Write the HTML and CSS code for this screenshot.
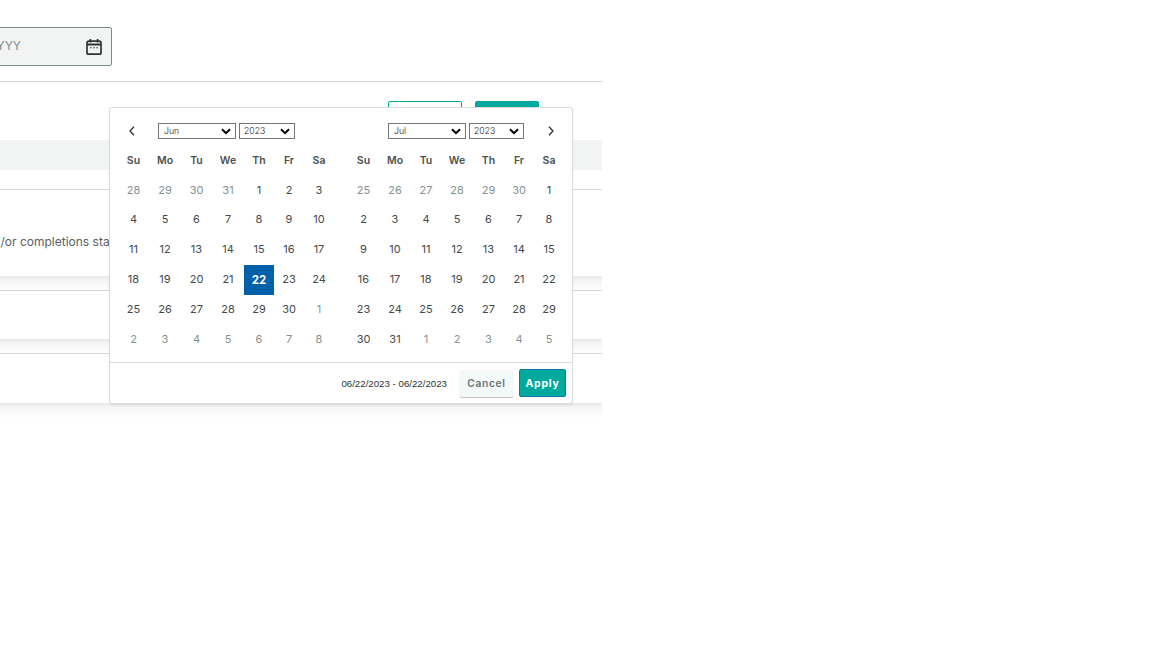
FILE: index.html
```html
<!DOCTYPE html>
<html lang="en">
<head>
<meta charset="utf-8">
<title>Date range</title>
<link rel="stylesheet" href="styles.css">
</head>
<body>
<div class="page">
  <div class="filter-row">
    <div class="date-field">
      <span class="placeholder">MM/DD/YYYY</span>
      <svg class="cal-icon" width="18" height="18" viewBox="0 0 18 18" fill="none" stroke="#2e3333" stroke-width="1.7">
        <rect x="2" y="3.2" width="14" height="13" rx="1.8"/>
        <path d="M5.4 1v3.4M12.6 1v3.4"/>
        <path d="M2 6.6h14" stroke-width="2"/>
        <path d="M5 9.8h1.6M8.2 9.8h1.6M11.4 9.8h1.6" stroke-width="1.1"/>
      </svg>
    </div>
  </div>
  <div class="actions">
    <span class="btn-outline"></span>
    <span class="btn-solid"></span>
  </div>
  <div class="band"></div>
  <div class="card first">
    <p class="card-text">Enrollments and/or completions status</p>
  </div>
  <div class="gap"></div>
  <div class="card second"></div>
  <div class="gap"></div>
  <div class="card third"></div>
  <div class="gap"></div>

  <div class="picker">
    <div class="calendars">
      <div class="calendar left">
        <div class="cal-head">
          <svg class="nav prev" width="10" height="12" viewBox="0 0 10 12" fill="none" stroke="#2e3333" stroke-width="1.3"><path d="M7 1.8 3 6l4 4.2"/></svg>
          <select class="month"><option>Jun</option></select>
          <select class="year"><option>2023</option></select>
        </div>
        <div class="grid">
          <b>Su</b><b>Mo</b><b>Tu</b><b>We</b><b>Th</b><b>Fr</b><b>Sa</b>
          <i>28</i><i>29</i><i>30</i><i>31</i><span>1</span><span>2</span><span>3</span>
          <span>4</span><span>5</span><span>6</span><span>7</span><span>8</span><span>9</span><span>10</span>
          <span>11</span><span>12</span><span>13</span><span>14</span><span>15</span><span>16</span><span>17</span>
          <span>18</span><span>19</span><span>20</span><span>21</span><span class="selected">22</span><span>23</span><span>24</span>
          <span>25</span><span>26</span><span>27</span><span>28</span><span>29</span><span>30</span><i>1</i>
          <i>2</i><i>3</i><i>4</i><i>5</i><i>6</i><i>7</i><i>8</i>
        </div>
      </div>
      <div class="calendar right">
        <div class="cal-head">
          <select class="month"><option>Jul</option></select>
          <select class="year"><option>2023</option></select>
          <svg class="nav next" width="10" height="12" viewBox="0 0 10 12" fill="none" stroke="#2e3333" stroke-width="1.3"><path d="M3 1.8 7 6l-4 4.2"/></svg>
        </div>
        <div class="grid">
          <b>Su</b><b>Mo</b><b>Tu</b><b>We</b><b>Th</b><b>Fr</b><b>Sa</b>
          <i>25</i><i>26</i><i>27</i><i>28</i><i>29</i><i>30</i><span>1</span>
          <span>2</span><span>3</span><span>4</span><span>5</span><span>6</span><span>7</span><span>8</span>
          <span>9</span><span>10</span><span>11</span><span>12</span><span>13</span><span>14</span><span>15</span>
          <span>16</span><span>17</span><span>18</span><span>19</span><span>20</span><span>21</span><span>22</span>
          <span>23</span><span>24</span><span>25</span><span>26</span><span>27</span><span>28</span><span>29</span>
          <span>30</span><span>31</span><i>1</i><i>2</i><i>3</i><i>4</i><i>5</i>
        </div>
      </div>
    </div>
    <div class="picker-foot">
      <span class="range">06/22/2023 - 06/22/2023</span>
      <button class="cancel" type="button">Cancel</button>
      <button class="apply" type="button">Apply</button>
    </div>
  </div>
</div>
</body>
</html>
```
FILE: styles.css
```css
* { box-sizing: border-box; }
html, body { margin: 0; padding: 0; background: #fff; }
body { font-family: Inter, "Open Sans", sans-serif; color: #3a4040; overflow: hidden; height: 648px; }

.page { position: relative; width: 602px; height: 648px; overflow: hidden; padding-top: 27px; }

.filter-row { height: 55px; border-bottom: 1px solid #cfd2d2; }
.date-field {
  width: 122px; height: 39px; margin-left: -10px;
  display: flex; align-items: center; justify-content: flex-end;
  gap: 64px; padding: 0 8px 0 0;
  background: #f2f4f4; border: 1px solid #7d8a8a; border-radius: 2px;
  overflow: hidden; white-space: nowrap;
}
.placeholder { flex: none; font-size: 12px; color: #7d8a8a; margin-bottom: 2px; }
.cal-icon { flex: none; }

.actions { display: flex; height: 58px; padding: 19px 0 0 388px; }
.btn-outline { width: 74px; height: 20px; border: 1px solid #00a99d; border-radius: 2px; }
.btn-solid { width: 64px; height: 20px; margin-left: 13px; background: #00a99d; border-radius: 2px; }
.band { height: 30px; background: #f2f4f4; }

.card { border-top: 1px solid #d5d8d8; background: #fff; }
.first { height: 87px; margin-top: 19px; }
.second { height: 49px; }
.third { height: 50px; }
.gap { height: 14px; background: linear-gradient(#e6e9e9, #f4f5f5 30%, #fdfdfd 100%); }
.card-text {
  margin: 44px 0 0 -270px; width: 397px; font-size: 12px; line-height: 16px; white-space: nowrap; color: #5a6060;
  text-align: right;
}

.picker {
  position: absolute; left: 109px; top: 107px; width: 464px; height: 297px;
  background: #fff; border: 1px solid #d9dcdc; border-radius: 3px;
  box-shadow: 0 1px 2px rgba(0, 0, 0, .08);
  display: flex; flex-direction: column;
}
.calendars { display: flex; height: 255px; padding: 7px 0 0 8px; gap: 14px; border-bottom: 1px solid #d9dcdc; }
.calendar { display: flex; flex-direction: column; }
.left { width: 216px; }
.right { width: 216px; }
.cal-head { position: relative; display: flex; align-items: center; height: 16px; margin-top: 8px; gap: 3px; }
.left .cal-head { padding-left: 40px; }
.right .cal-head { padding-left: 40px; }
.nav { flex: none; position: absolute; top: 2px; }
.prev { left: 9px; }
.next { right: 8px; }
select {
  appearance: none; -webkit-appearance: none;
  height: 16px; padding: 0 0 0 4px; margin: 0;
  font-family: Inter, sans-serif; font-size: 8.7px; font-weight: 300; color: #1c1c1c;
  background: #fff url("data:image/svg+xml,%3Csvg xmlns='http://www.w3.org/2000/svg' width='10' height='7' viewBox='0 0 10 7'%3E%3Cpath d='M1 1.2 5 5.2 9 1.2' fill='none' stroke='%23000' stroke-width='2'/%3E%3C/svg%3E") no-repeat right 4px center;
  border: 1px solid #767676; border-radius: 0;
}
.month { width: 78px; padding-left: 5px; }
.year { width: 56px; }
.right .year { width: 55px; }

.grid { display: grid; grid-auto-rows: 30px; margin-top: 6px; font-size: 11px; text-align: center; }
.left .grid { grid-template-columns: 31px 32px 31px 32px 30px 30px 30px; }
.right .grid { grid-template-columns: 31px 32px 30px 32px 31px 30px 30px; }
.grid > * { display: flex; align-items: center; justify-content: center; font-style: normal; padding-bottom: 2px; }
.grid > :nth-child(-n+14) { padding-bottom: 0; }
.grid b { font-weight: 600; color: #4a5050; font-size: 10.5px; }
.grid span { color: #444a4a; }
.grid i { color: #84918f; }
.grid .selected { background: #0060a9; color: #fff; font-weight: 700; font-size: 11.5px; padding-bottom: 0; }

.picker-foot { flex: 1; display: flex; align-items: center; justify-content: flex-end; padding: 0 6px 0 0; }
.range { font-family: "Liberation Sans", Arial, sans-serif; font-size: 9.7px; color: #2e3333; margin-right: 13px; }
button { font-family: Inter, sans-serif; font-size: 10.5px; font-weight: 700; letter-spacing: .7px; border-radius: 2px; }
.cancel { width: 53px; height: 27px; margin-right: 6px; padding: 0; background: #f3f9f9; color: #6a7474; font-size: 10.2px; font-weight: 600; border: 0; box-shadow: 0 1px 1px rgba(0,0,0,.25); }
.apply { width: 47px; height: 28px; padding: 0; background: #00a99d; color: #fff; border: 1px solid #0a78a8; }
```
